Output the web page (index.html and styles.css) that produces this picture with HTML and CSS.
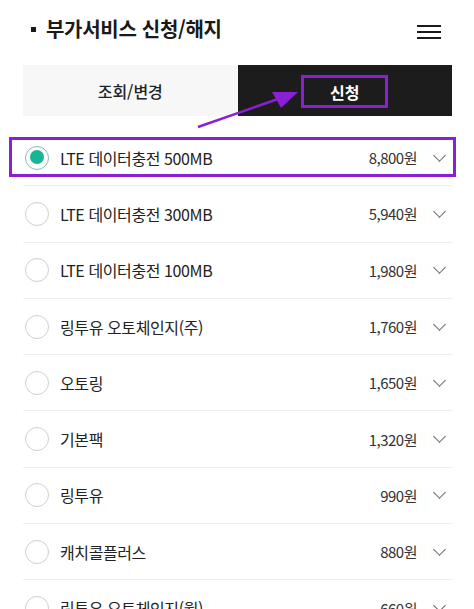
FILE: index.html
```html
<!DOCTYPE html>
<html lang="ko">
<head>
<meta charset="utf-8">
<link rel="stylesheet" href="styles.css">
</head>
<body>
<div class="page">
  <header class="header">
    <h1 class="title"><span class="bullet"></span>부가서비스 신청/해지</h1>
    <div class="menu"><span></span><span></span><span></span></div>
  </header>
  <div class="tabs">
    <div class="tab">조회/변경</div>
    <div class="tab active"><span class="hl">신청</span></div>
  </div>
  <ul class="list">
    <li class="row selected"><span class="radio on"></span><span class="name">LTE 데이터충전 500MB</span><span class="price">8,800원</span><span class="chev"></span><span class="box"></span></li>
    <li class="row"><span class="radio"></span><span class="name">LTE 데이터충전 300MB</span><span class="price">5,940원</span><span class="chev"></span></li>
    <li class="row"><span class="radio"></span><span class="name">LTE 데이터충전 100MB</span><span class="price">1,980원</span><span class="chev"></span></li>
    <li class="row"><span class="radio"></span><span class="name">링투유 오토체인지(주)</span><span class="price">1,760원</span><span class="chev"></span></li>
    <li class="row"><span class="radio"></span><span class="name">오토링</span><span class="price">1,650원</span><span class="chev"></span></li>
    <li class="row"><span class="radio"></span><span class="name">기본팩</span><span class="price">1,320원</span><span class="chev"></span></li>
    <li class="row"><span class="radio"></span><span class="name">링투유</span><span class="price">990원</span><span class="chev"></span></li>
    <li class="row"><span class="radio"></span><span class="name">캐치콜플러스</span><span class="price">880원</span><span class="chev"></span></li>
    <li class="row"><span class="radio"></span><span class="name">링투유 오토체인지(월)</span><span class="price">660원</span><span class="chev"></span></li>
  </ul>
  <svg class="arrow" width="474" height="140" viewBox="0 0 474 140">
    <line x1="198" y1="127" x2="278" y2="99" stroke="#8a1fd6" stroke-width="2.5"/>
    <polygon points="298,92 272,92 281,108" fill="#8a1fd6"/>
  </svg>
</div>
</body>
</html>
```
FILE: styles.css
```css
* { box-sizing: border-box; }
html, body { margin: 0; padding: 0; background: #fff; }
body {
  font-family: "Noto Sans CJK KR", "Noto Sans", sans-serif;
  color: #222;
  width: 474px;
  height: 609px;
  overflow: hidden;
}
.page { position: relative; }
.header {
  height: 65px;
  display: flex;
  align-items: center;
  justify-content: space-between;
  padding: 0 33px 8px 31px;
}
.title {
  margin: 0;
  font-size: 20px;
  font-weight: 700;
  display: flex;
  align-items: center;
  letter-spacing: -0.3px;
  color: #1a1a1a;
}
.bullet {
  width: 5px;
  height: 5px;
  background: #1a1a1a;
  margin-right: 10px;
  margin-top: 1px;
}
.menu {
  width: 24px;
  display: flex;
  flex-direction: column;
  gap: 4px;
  margin-top: 6px;
}
.menu span { height: 2px; background: #1a1a1a; }
.tabs {
  margin: 0 22px 0 23px;
  height: 51px;
  display: flex;
}
.tab {
  flex: 1;
  display: flex;
  align-items: center;
  justify-content: center;
  background: #f7f7f7;
  font-size: 16px;
  font-weight: 500;
  color: #222;
}
.tab.active { background: #1c1c1c; color: #fff; font-weight: 700; }
.hl {
  width: 87px;
  height: 33px;
  border: 3.5px solid #8a1fd6;
  display: flex;
  align-items: center;
  justify-content: center;
  margin-top: 2px;
}
.list {
  list-style: none;
  margin: 14px 22px 0 23px;
  padding: 0;
}
.row {
  position: relative;
  height: 56.3px;
  border-bottom: 1px solid #efefef;
  display: flex;
  align-items: center;
  padding: 0 6px 0 2px;
}
.radio {
  width: 24px;
  height: 24px;
  border-radius: 50%;
  border: 1.5px solid #cfcfcf;
  flex: none;
  position: relative;
}
.radio.on { border: 1.5px solid #7fbfb0; }
.radio.on::after {
  content: "";
  position: absolute;
  left: 3.5px; top: 3.5px;
  width: 14px; height: 14px;
  border-radius: 50%;
  background: #17b495;
}
.name {
  margin-left: 11px;
  flex: 1;
  font-size: 16px;
  letter-spacing: -0.4px;
  color: #222;
}
.price {
  font-size: 15px;
  letter-spacing: -0.5px;
  color: #333;
}
.chev {
  width: 9px;
  height: 9px;
  border-right: 1.5px solid #666;
  border-bottom: 1.5px solid #666;
  transform: rotate(45deg);
  margin: -5px 2px 0 18px;
}
.box {
  position: absolute;
  left: -14px;
  right: -4px;
  top: 7px;
  bottom: 8px;
  border: 3.5px solid #8a1fd6;
}
.arrow { position: absolute; left: 0; top: 0; }
```
